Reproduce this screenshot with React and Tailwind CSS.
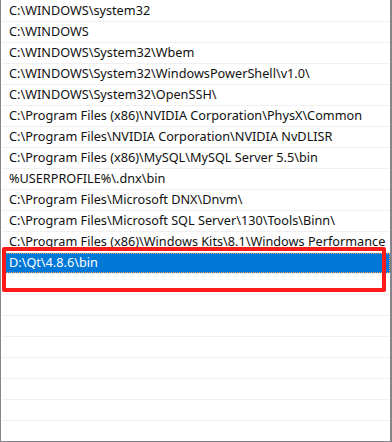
import React from "react";

const rows = [
  "C:\\WINDOWS\\system32",
  "C:\\WINDOWS",
  "C:\\WINDOWS\\System32\\Wbem",
  "C:\\WINDOWS\\System32\\WindowsPowerShell\\v1.0\\",
  "C:\\WINDOWS\\System32\\OpenSSH\\",
  "C:\\Program Files (x86)\\NVIDIA Corporation\\PhysX\\Common",
  "C:\\Program Files\\NVIDIA Corporation\\NVIDIA NvDLISR",
  "C:\\Program Files (x86)\\MySQL\\MySQL Server 5.5\\bin",
  "%USERPROFILE%\\.dnx\\bin",
  "C:\\Program Files\\Microsoft DNX\\Dnvm\\",
  "C:\\Program Files\\Microsoft SQL Server\\130\\Tools\\Binn\\",
  "C:\\Program Files (x86)\\Windows Kits\\8.1\\Windows Performance",
  "D:\\Qt\\4.8.6\\bin",
  "", "", "", "", "", "", "", "",
];

export default function App() {
  return (
    <div
      className="relative w-[392px] h-[442px] bg-white border-l border-r-2 border-b border-[#85858c] overflow-hidden"
      style={{ fontFamily: '"Noto Sans", "Liberation Sans", sans-serif' }}
    >
      <div className="pt-[1px] pl-[1px]">
        {rows.map((t, i) => {
          const sel = i === 12;
          return (
            <div key={i} className="h-[21px] border-b border-[#f0f0f0]">
              <div
                className={
                  sel
                    ? "h-[20px] pl-[7px] flex items-center bg-[#0078d7] text-white text-[12.7px] whitespace-nowrap overflow-hidden outline outline-1 outline-dotted outline-[#f0a060] -outline-offset-1"
                    : "h-[20px] pl-[7px] flex items-center text-[#111] text-[12.7px] whitespace-nowrap overflow-hidden"
                }
              >
                {t}
              </div>
            </div>
          );
        })}
      </div>
      <div className="absolute left-[1px] top-[247px] w-[384px] h-[45px] border-[4px] border-[#ff1a1a] rounded-[2px]" />
    </div>
  );
}
